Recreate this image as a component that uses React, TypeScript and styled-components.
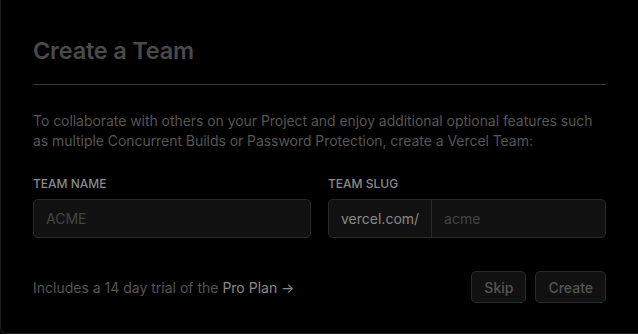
import styled, { createGlobalStyle } from 'styled-components'

const GlobalStyle = createGlobalStyle`
  html, body {
    margin: 0;
    padding: 0;
    background: #000;
  }
  body {
    font-family: Inter, 'Liberation Sans', sans-serif;
    -webkit-font-smoothing: antialiased;
  }
`

const CreateTeamModal = () => {
  return (
    <Card>
      <Header>
        <Title>Create a Team</Title>
      </Header>
      <Description>
        To collaborate with others on your Project and enjoy additional optional features such as
        multiple Concurrent Builds or Password Protection, create a Vercel Team:
      </Description>
      <Fields>
        <Field>
          <Label>Team Name</Label>
          <InputBox>
            <TextInput placeholder="ACME" />
          </InputBox>
        </Field>
        <Field>
          <Label>Team Slug</Label>
          <InputBox>
            <Prefix>vercel.com/</Prefix>
            <TextInput placeholder="acme" />
          </InputBox>
        </Field>
      </Fields>
      <Footer>
        <TrialNote>
          Includes a 14 day trial of the <ProLink>Pro Plan →</ProLink>
        </TrialNote>
        <Actions>
          <Button>Skip</Button>
          <Button>Create</Button>
        </Actions>
      </Footer>
    </Card>
  )
}

const App = () => (
  <>
    <GlobalStyle />
    <CreateTeamModal />
  </>
)

export default App

const Card = styled.div`
  box-sizing: border-box;
  width: 638px;
  height: 334px;
  padding: 0 32px 0 32px;
  border-left: 1px solid #1c1c1c;
  border-bottom: 1px solid #1c1c1c;
  border-bottom-left-radius: 6px;
  background: #000;
  display: flex;
  flex-direction: column;
`

const Header = styled.div`
  padding-top: 36px;
  padding-bottom: 19px;
  border-bottom: 1px solid #3a3a3a;
`

const Title = styled.h1`
  margin: 0;
  font-size: 23.5px;
  line-height: 29px;
  font-weight: 600;
  color: #4a4a4a;
  letter-spacing: -0.2px;
`

const Description = styled.p`
  margin: 26px 0 0;
  font-size: 14px;
  line-height: 20px;
  color: #555;
  letter-spacing: -0.05px;
`

const Fields = styled.div`
  margin-top: 25px;
  display: grid;
  grid-template-columns: minmax(0, 1fr) minmax(0, 1fr);
  column-gap: 17px;
`

const Field = styled.div`
  display: flex;
  flex-direction: column;
`

const Label = styled.label`
  font-size: 12px;
  line-height: 16px;
  font-weight: 500;
  text-transform: uppercase;
  color: #8a8a8a;
  margin-bottom: 7px;
`

const InputBox = styled.div`
  box-sizing: border-box;
  display: flex;
  align-items: stretch;
  height: 39px;
  background: #111;
  border: 1px solid #2a2a2a;
  border-radius: 5px;
  overflow: hidden;
`

const Prefix = styled.span`
  display: flex;
  align-items: center;
  padding: 0 12px 0 12px;
  font-size: 14px;
  color: #8a8a8a;
  border-right: 1px solid #2a2a2a;
`

const TextInput = styled.input`
  flex: 1;
  min-width: 0;
  border: none;
  outline: none;
  background: transparent;
  padding: 0 12px;
  font-family: Inter, 'Liberation Sans', sans-serif;
  font-size: 14px;
  color: #888;

  &::placeholder {
    color: #444;
  }
`

const Footer = styled.div`
  margin-top: 33px;
  display: flex;
  align-items: center;
  justify-content: space-between;
`

const TrialNote = styled.span`
  font-size: 14px;
  color: #555;
`

const ProLink = styled.span`
  color: #8a8a8a;
  cursor: pointer;
`

const Actions = styled.div`
  display: flex;
  gap: 9px;
`

const Button = styled.button`
  box-sizing: border-box;
  height: 32px;
  padding: 0 12px;
  background: #111;
  border: 1px solid #2a2a2a;
  border-radius: 5px;
  font-family: Inter, 'Liberation Sans', sans-serif;
  font-size: 14px;
  font-weight: 500;
  color: #555;
  cursor: pointer;
`
